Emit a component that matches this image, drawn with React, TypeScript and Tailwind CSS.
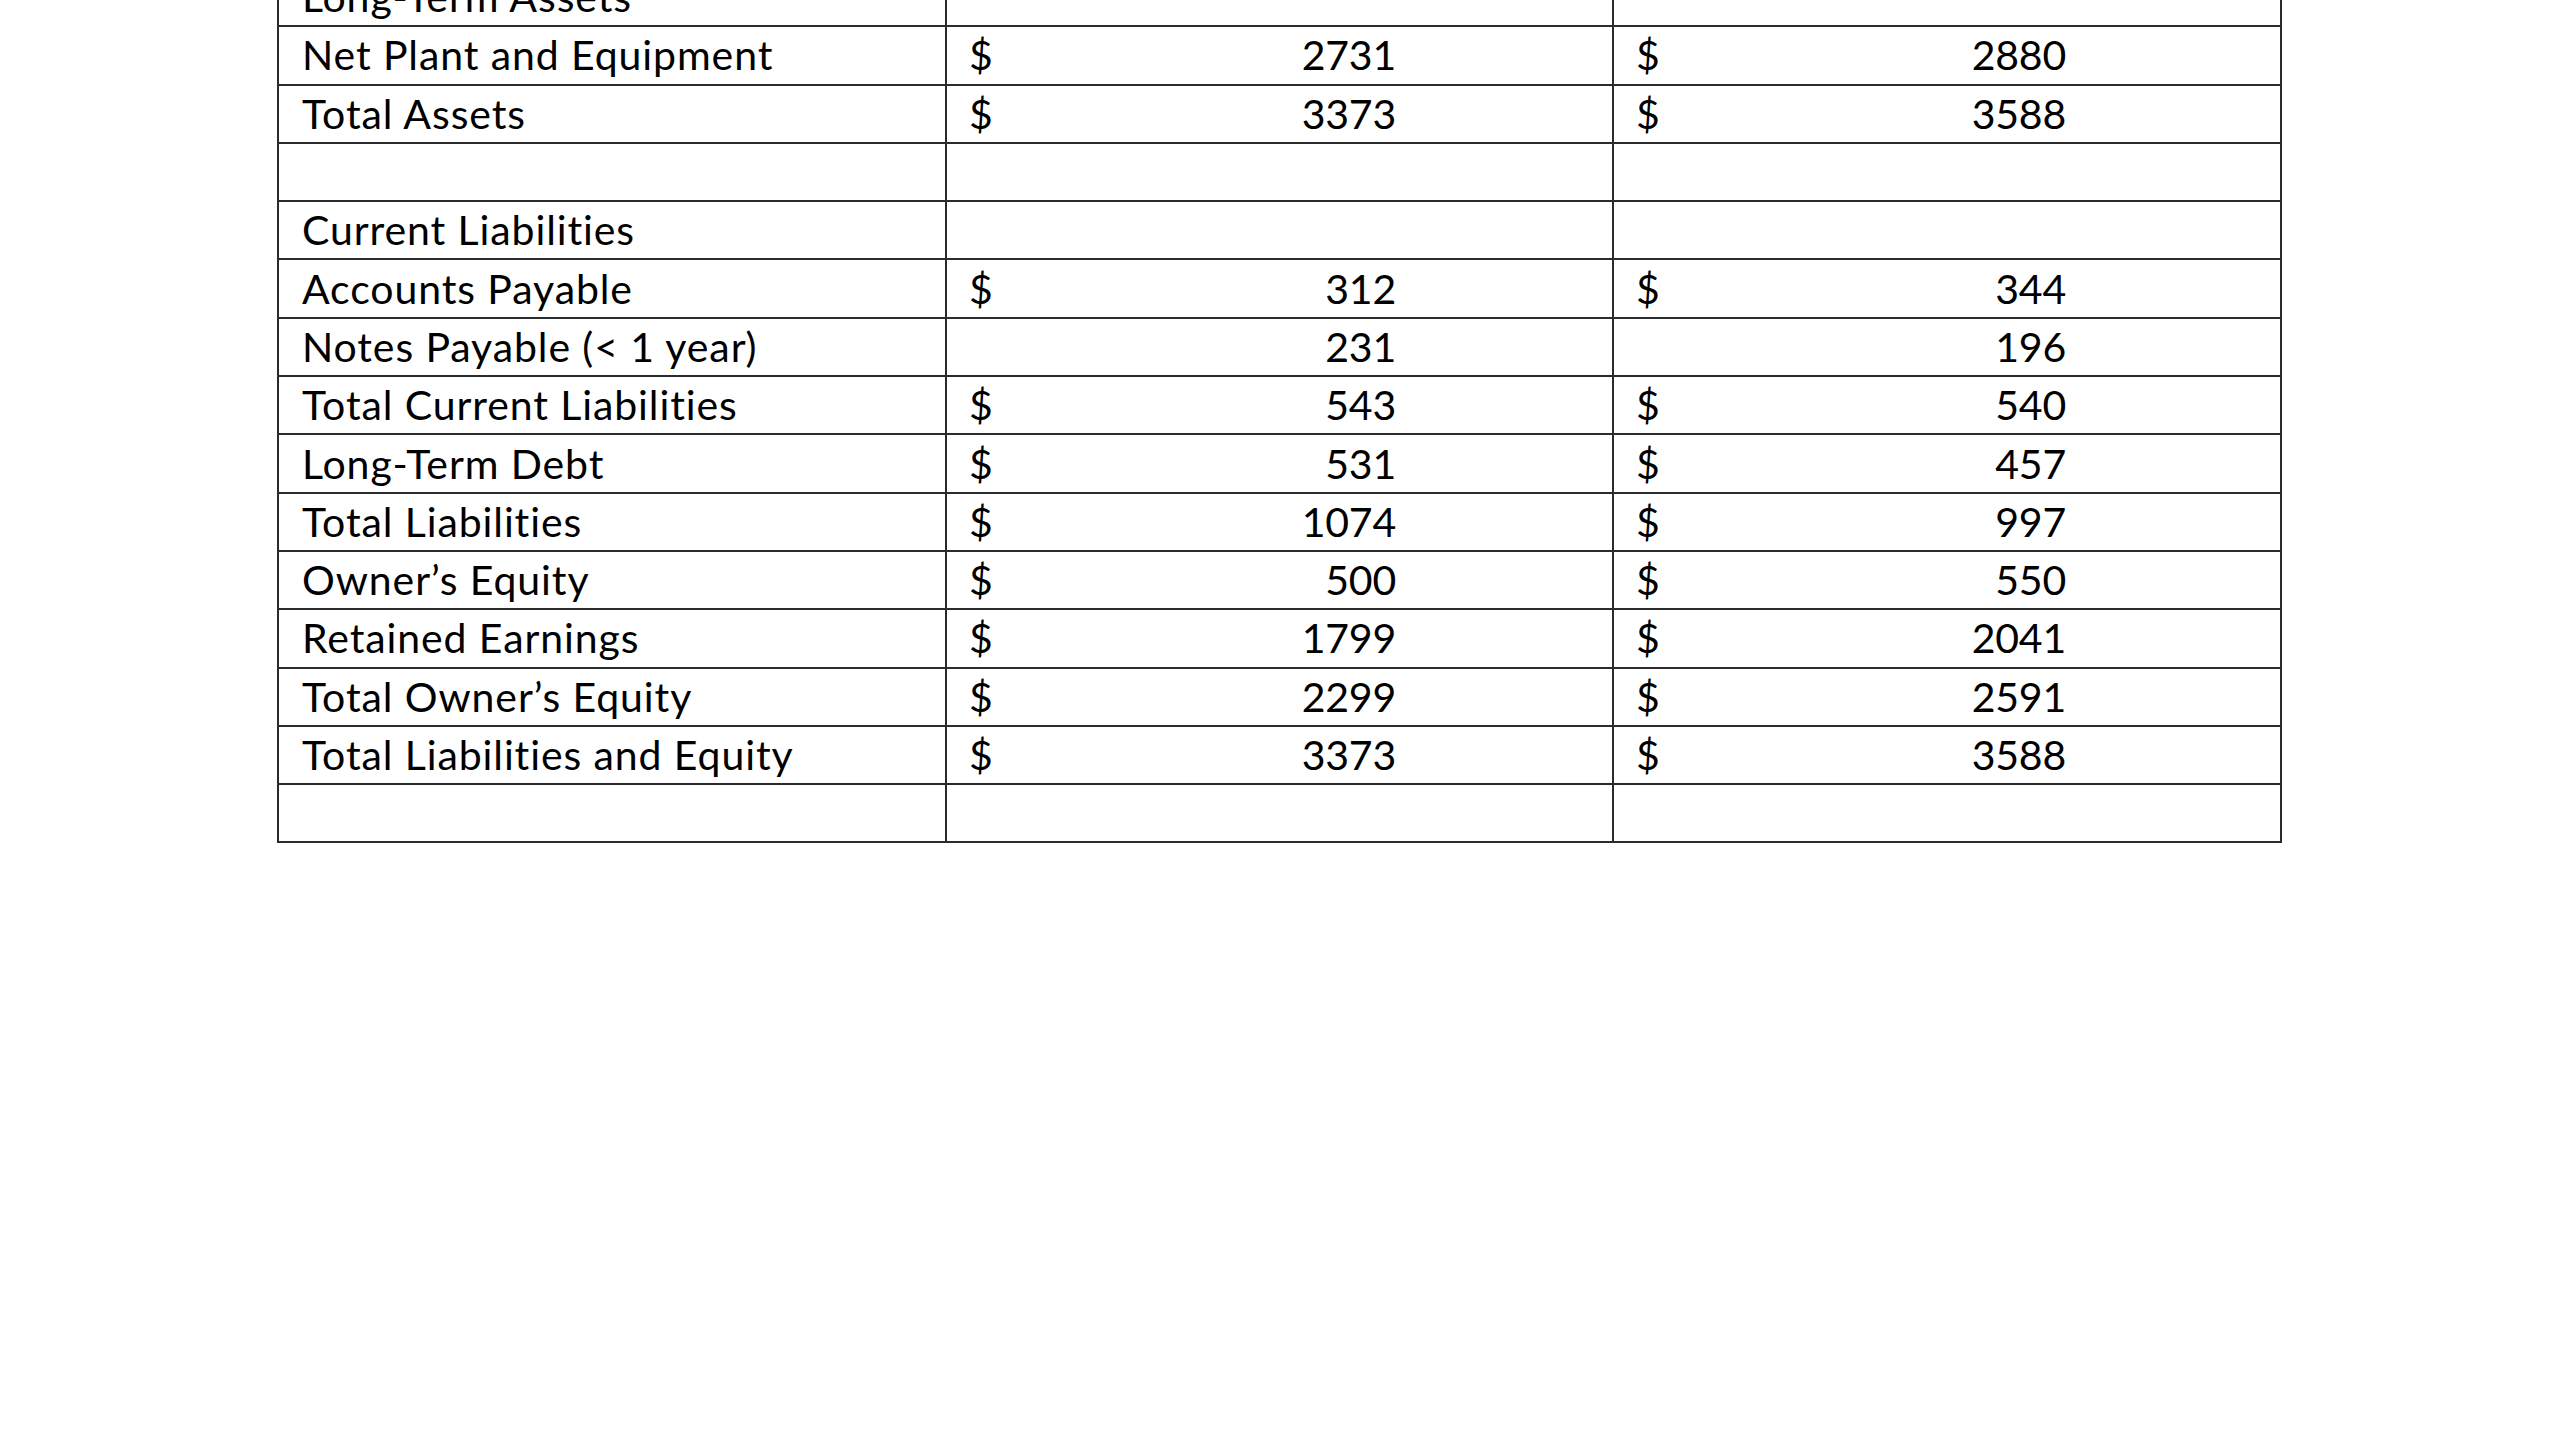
const rows: { label: string; a?: string; b?: string; da?: boolean; db?: boolean }[] = [
  { label: 'Long-Term Assets' },
  { label: 'Net Plant and Equipment', a: '2731', b: '2880', da: true, db: true },
  { label: 'Total Assets', a: '3373', b: '3588', da: true, db: true },
  { label: '' },
  { label: 'Current Liabilities' },
  { label: 'Accounts Payable', a: '312', b: '344', da: true, db: true },
  { label: 'Notes Payable (< 1 year)', a: '231', b: '196' },
  { label: 'Total Current Liabilities', a: '543', b: '540', da: true, db: true },
  { label: 'Long-Term Debt', a: '531', b: '457', da: true, db: true },
  { label: 'Total Liabilities', a: '1074', b: '997', da: true, db: true },
  { label: 'Owner’s Equity', a: '500', b: '550', da: true, db: true },
  { label: 'Retained Earnings', a: '1799', b: '2041', da: true, db: true },
  { label: 'Total Owner’s Equity', a: '2299', b: '2591', da: true, db: true },
  { label: 'Total Liabilities and Equity', a: '3373', b: '3588', da: true, db: true },
  { label: '' },
];

const ValueCell = ({ dollar, value, pr }: { dollar?: boolean; value?: string; pr: string }) => (
  <div className={`flex items-center justify-between border-r-2 border-[#2b2b2b] pl-[22px] ${pr}`}>
    <span>{dollar ? '$' : ''}</span>
    <span className="tracking-[-0.2px]">{value ?? ''}</span>
  </div>
);

export default function App() {
  return (
    <div className="w-[2560px] h-[1440px] overflow-hidden bg-white text-black">
      <div
        className="ml-[277px] mt-[-33px] w-[2005px] border-l-2 border-t-2 border-[#2b2b2b] text-[41px] leading-[48px] tracking-[0.9px] [font-variant-ligatures:none]"
        style={{ fontFamily: 'Lato, "Noto Sans", sans-serif' }}
      >
        {rows.map((r, i) => (
          <div
            key={i}
            className="grid grid-cols-[668px_667px_668px] h-[58.3px] border-b-2 border-[#2b2b2b]"
          >
            <div className="flex items-center border-r-2 border-[#2b2b2b] pl-[23px] whitespace-nowrap">
              {r.label}
            </div>
            <ValueCell dollar={r.da} value={r.a} pr="pr-[216px]" />
            <ValueCell dollar={r.db} value={r.b} pr="pr-[214px]" />
          </div>
        ))}
      </div>
    </div>
  );
}
